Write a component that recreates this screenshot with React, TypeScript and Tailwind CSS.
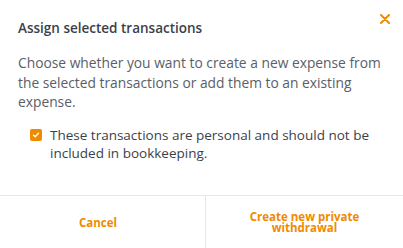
import React from "react";

export default function App() {
  return (
    <div className="w-[403px] h-[248px] bg-white flex flex-col overflow-hidden" style={{ fontFamily: "'Open Sans', Lato, sans-serif" }}>
      <div className="flex items-start justify-between pl-[18px] pr-[12px] pt-[18px]">
        <div className="text-[13.5px] font-semibold text-[#3b3f4a] leading-[16px] mt-[2px]">Assign selected transactions</div>
        <svg width="10" height="10" viewBox="0 0 10 10" className="-mt-[4px] mr-[1px]">
          <path d="M1 1L9 9M9 1L1 9" stroke="#f08a00" strokeWidth="2" strokeLinecap="round" />
        </svg>
      </div>
      <p className="pl-[18px] pr-[10px] mt-[17px] text-[13.8px] leading-[19.5px] text-[#5a5e68]">
        Choose whether you want to create a new expense from the selected transactions or add them to an existing expense.
      </p>
      <div className="flex items-start pl-[30px] pr-[20px] mt-[14px]">
        <div className="w-[12px] h-[12px] rounded-[2px] bg-[#f08a00] flex items-center justify-center mt-[3px] shrink-0">
          <svg width="8" height="8" viewBox="0 0 8 8">
            <path d="M1.5 4.2L3.2 5.8L6.5 2.2" stroke="white" strokeWidth="1.4" fill="none" strokeLinecap="round" strokeLinejoin="round" />
          </svg>
        </div>
        <div className="ml-[8px] text-[13.5px] leading-[18.5px] text-[#3b3f4a]">
          These transactions are personal and should not be included in bookkeeping.
        </div>
      </div>
      <div className="mt-auto border-t border-[#e6e6e6] h-[53px] flex">
        <button className="w-[206px] flex items-center justify-center pr-[9px] text-[11.5px] font-bold text-[#f08a00] leading-[11px] border-r border-[#e6e6e6]">
          Cancel
        </button>
        <button className="flex-1 flex items-center justify-center text-[11.5px] font-bold text-[#f08a00] leading-[11px] text-center">
          <span className="w-[125px]">Create new private withdrawal</span>
        </button>
      </div>
    </div>
  );
}
